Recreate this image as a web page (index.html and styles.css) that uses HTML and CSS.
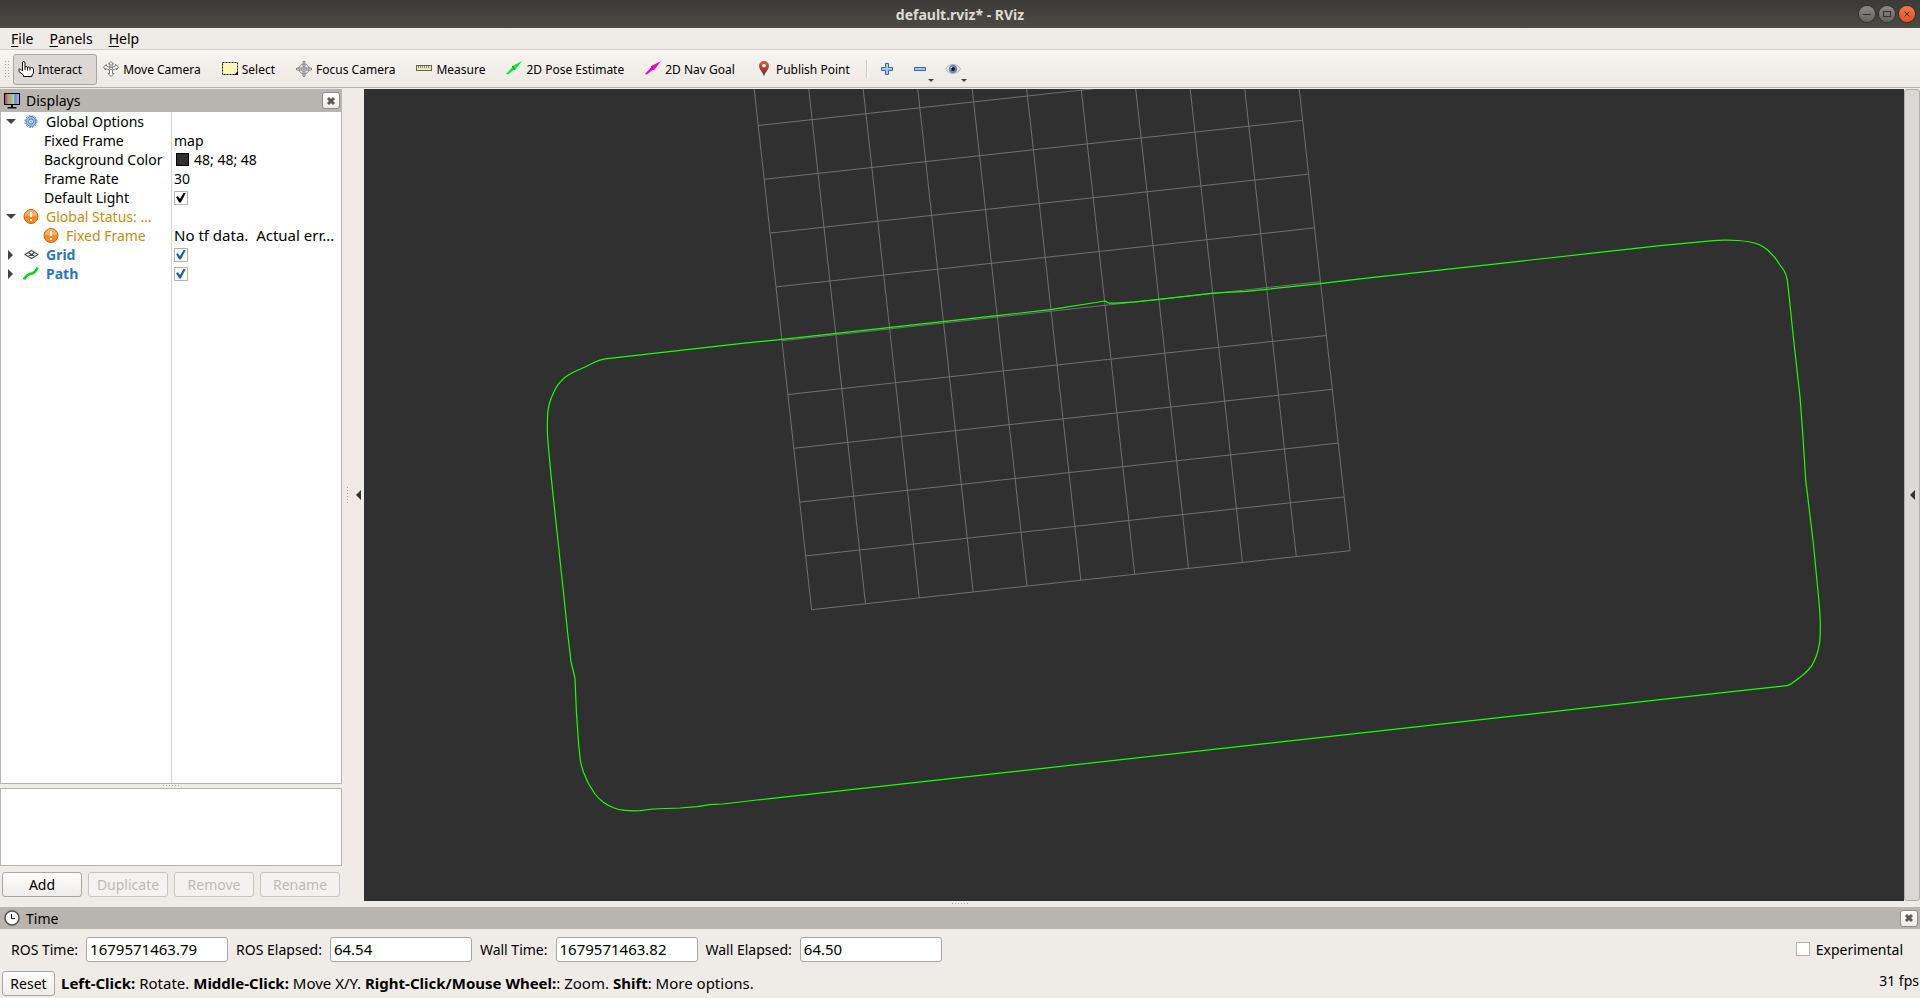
FILE: index.html
```html
<!DOCTYPE html>
<html lang="en">
<head>
<meta charset="utf-8">
<title>default.rviz* - RViz</title>
<link rel="stylesheet" href="styles.css">
</head>
<body>
<header class="titlebar">
  <h1 class="title">default.rviz* - RViz</h1>
  <div class="window-buttons">
    <button class="win" aria-label="Minimize"><svg viewBox="0 0 16 16"><path d="M4 8.500h8"/></svg></button>
    <button class="win" aria-label="Maximize"><svg viewBox="0 0 16 16"><rect x="4.500" y="5.500" width="7" height="5"/></svg></button>
    <button class="win win-close" aria-label="Close"><svg viewBox="0 0 16 16"><path d="M5.500 5.500l5 5M10.500 5.500l-5 5"/></svg></button>
  </div>
</header>
<nav class="menubar">
  <button class="menu"><u>F</u>ile</button>
  <button class="menu"><u>P</u>anels</button>
  <button class="menu"><u>H</u>elp</button>
</nav>
<div class="toolbar">
  <span class="grip"></span>
  <button class="tool tool-on">
    <svg class="icon" viewBox="0 0 16 16"><path d="M4.500 10V2q0-1.500 1.200-1.500T7 2v4.500q0-1 1.200-1T9.500 7q0-1 1.200-1T12 7.500q0-1 1.500-1T15.500 8v4l-1.500 2v1.500H5.500V14L1 10.500v-2q0-1 1.500-.5l2 2M7 6.500V9M9.500 7v2.500M12 7.500v2" fill="#fff" stroke="#111"/></svg>
    Interact</button>
  <button class="tool">
    <svg class="icon" viewBox="0 0 16 16"><g fill="#fff" stroke="#777"><path d="M8 .5l2.500 2.500H9v3.500l3.500-1.500V3.500L15.500 6 13.500 9V7.500L9.500 9v3.500H11L8 15.500 5 12.500h1.500V9l-4-1.500V9L.5 6l3-2.500V5L7 6.500V3H5.500z"/><path d="M6 7.500L8 6l2 1.500L8 9z"/></g></svg>
    Move Camera</button>
  <button class="tool">
    <svg class="icon" viewBox="0 0 16 16"><rect x=".5" y="1.500" width="15" height="12" fill="#fff5b5" stroke="#111" stroke-dasharray="2 1"/><path d="M16 10v4h-4z" fill="#000"/></svg>
    Select</button>
  <button class="tool">
    <svg class="icon" viewBox="0 0 16 16"><g fill="none" stroke="#858585"><circle cx="8" cy="8" r="5"/><circle cx="8" cy="8" r="2.500"/><path d="M7 3V.5h2V5M7 3v2.500M3 7H.5v2h5M3 7h2.500M13 7h2.500v2h-5M13 7h-2.500M7 13v2.500h2V11M7 13v-2.500M8 6v4M6 8h4"/></g></svg>
    Focus Camera</button>
  <button class="tool">
    <svg class="icon" viewBox="0 0 16 16"><rect x=".5" y="4.500" width="15" height="5" fill="#efe6ae" stroke="#66645c"/><path d="M2.500 5v2M4.500 5v2M6.500 5v2M8.500 5v2M10.500 5v2M12.500 5v2" stroke="#8c8768"/></svg>
    Measure</button>
  <button class="tool">
    <svg class="icon" viewBox="0 0 16 16"><path d="M0 13l6-6.500.5-1.500L16 0 9.500 8.500 7.500 9 2 13.500z" fill="#00f02c"/><path d="M6.500 5l2 3.500" stroke="#087d1a"/></svg>
    2D Pose Estimate</button>
  <button class="tool">
    <svg class="icon" viewBox="0 0 16 16"><path d="M0 13l6-6.500.5-1.500L16 0 9.500 8.500 7.500 9 2 13.500z" fill="#f800d5"/><path d="M6.500 5l2 3.500" stroke="#8f087c"/></svg>
    2D Nav Goal</button>
  <button class="tool">
    <svg class="icon" viewBox="0 0 16 16"><defs><linearGradient id="pin" x2="0" y2="1"><stop offset=".2" stop-color="#de4e31"/><stop offset="1" stop-color="#473412"/></linearGradient></defs><path d="M8 15.500C7.500 12 3 8.500 3 4.700a5 4.700 0 0 1 10 0c0 3.800-4.500 7.300-5 10.800z" fill="url(#pin)"/><circle cx="8" cy="4.700" r="1.800" fill="#fff"/></svg>
    Publish Point</button>
  <span class="separator"></span>
  <button class="tool-small" aria-label="Add tool"><svg class="icon" viewBox="0 0 16 16"><path d="M6.500 2.500h3v4h4v3h-4v4h-3v-4h-4v-3h4z" fill="#a9c8ea" stroke="#3465a4"/></svg></button>
  <button class="tool-small has-menu" aria-label="Remove tool"><svg class="icon" viewBox="0 0 16 16"><path d="M2.500 6.500h11v3h-11z" fill="#a9c8ea" stroke="#3465a4"/></svg></button>
  <button class="tool-small has-menu" aria-label="Tool visibility"><svg class="icon" viewBox="0 0 16 16"><path d="M.5 8Q3 3.500 8 3.500T15.500 8Q13 12.500 8 12.500T.5 8z" fill="#e9e9e7" stroke="#b5b5b2"/><circle cx="8" cy="8" r="3.800" fill="#7089c5" stroke="#52659c" stroke-width=".6"/><circle cx="8" cy="8" r="1.900" fill="#10152a"/><circle cx="6.500" cy="6.500" r=".8" fill="#fff"/></svg></button>
</div>
<main class="workspace">
  <aside class="displays">
    <header class="dock-title">
      <svg class="icon" viewBox="0 0 16 16"><defs><linearGradient id="scr"><stop offset=".05" stop-color="#b94b4b"/><stop offset=".33" stop-color="#d9a0a0"/><stop offset=".34" stop-color="#69bd69"/><stop offset=".66" stop-color="#b5e5b5"/><stop offset=".67" stop-color="#7777d7"/><stop offset="1" stop-color="#b8b8ee"/></linearGradient></defs><rect x=".5" y=".5" width="15" height="11" fill="url(#scr)" stroke="#000"/><path d="M7 12h2v2h3.500v1.500h-9V14H7z" fill="#111"/></svg>
      <h2>Displays</h2>
      <button class="dock-close" aria-label="Close Displays"><svg viewBox="0 0 10 10"><path d="M2 2l6 6M8 2l-6 6"/></svg></button>
    </header>
    <div class="tree">
      <table>
        <colgroup><col class="col-name"><col></colgroup>
        <tr><td><div class="cell"><i class="arrow open"></i><svg class="icon" viewBox="0 0 16 16"><circle cx="8" cy="7.500" r="5" fill="#9dbde3" stroke="#4a7fc2"/><circle cx="8" cy="7.500" r="6" fill="none" stroke="#4a7fc2" stroke-dasharray="1.800 1.340"/><circle cx="8" cy="7.500" r="2.500" fill="#dce8f6" stroke="#4a7fc2"/><circle cx="8" cy="7.500" r=".8" fill="#4a7fc2"/></svg>Global Options</div></td><td></td></tr>
        <tr><td><div class="cell leaf">Fixed Frame</div></td><td><div class="value">map</div></td></tr>
        <tr><td><div class="cell leaf">Background Color</div></td><td><div class="value"><i class="swatch"></i>48; 48; 48</div></td></tr>
        <tr><td><div class="cell leaf">Frame Rate</div></td><td><div class="value">30</div></td></tr>
        <tr><td><div class="cell leaf">Default Light</div></td><td><div class="value"><input type="checkbox" class="check" aria-label="Default Light" checked></div></td></tr>
        <tr class="warn"><td><div class="cell"><i class="arrow open"></i><svg class="icon" viewBox="0 0 16 16"><circle cx="8" cy="7.500" r="7" fill="#f78a1e" stroke="#cf6410"/><path d="M2 6.500a6 5.500 0 0 1 12 0q-6 2-12 0z" fill="#fbb069"/><path d="M8 3v5M8 10v2" stroke="#fff" stroke-width="2"/></svg>Global Status: …</div></td><td></td></tr>
        <tr class="warn"><td><div class="cell child"><svg class="icon" viewBox="0 0 16 16"><circle cx="8" cy="7.500" r="7" fill="#f78a1e" stroke="#cf6410"/><path d="M2 6.500a6 5.500 0 0 1 12 0q-6 2-12 0z" fill="#fbb069"/><path d="M8 3v5M8 10v2" stroke="#fff" stroke-width="2"/></svg>Fixed Frame</div></td><td><div class="value message">No tf data.&nbsp; Actual err…</div></td></tr>
        <tr class="display"><td><div class="cell"><i class="arrow"></i><svg class="icon" viewBox="0 0 16 16"><path d="M8.500 3.500L15 7.500 8.500 11.500 2 7.500zM5.300 5.500l6.500 4M11.700 5.500l-6.400 4" fill="none" stroke="#4a4a4a" stroke-width="1.100"/></svg>Grid</div></td><td><div class="value"><input type="checkbox" class="check blue" aria-label="Grid" checked></div></td></tr>
        <tr class="display"><td><div class="cell"><i class="arrow"></i><svg class="icon" viewBox="0 0 16 16"><path d="M1 13.500C4 7.500 6 8.500 9 7.500s4-2 5.500-6" fill="none" stroke="#00d90c" stroke-width="2.600"/></svg>Path</div></td><td><div class="value"><input type="checkbox" class="check blue" aria-label="Path" checked></div></td></tr>
      </table>
    </div>
    <div class="splitter"></div>
    <div class="description"></div>
    <div class="actions">
      <button class="btn">Add</button>
      <button class="btn" disabled>Duplicate</button>
      <button class="btn" disabled>Remove</button>
      <button class="btn" disabled>Rename</button>
    </div>
  </aside>
  <button class="handle handle-left" aria-label="Hide left dock"><i class="dots"></i><i class="tri-left"></i></button>
  <div class="view">
    <svg viewBox="364 89 1540 812" preserveAspectRatio="xMidYMid slice" role="img" aria-label="Grid and path">
      <path id="grid" class="grid-lines"/>
      <path class="route" d="M1105 301L1109 303.200H1116L1135 301.800 1159 299.300 1213 293.200 1246 291.400 1267 289.300 1320 283.600 1360 278.900 1660 245.700 1703 241.700Q1714 240.400 1723 240.200 1732 240 1738 240.500 1745 241 1750 242 1756 243.200 1760 245 1764 247 1768 250.300L1775 257.700 1780 265 1784 270.500Q1786 274 1787.300 280L1789.300 298 1793.300 336.700 1800 396.700 1802.700 433 1805.700 480 1813.300 543 1818.500 596.700Q1820 612 1820.300 623 1820.500 634 1819.700 642 1818.600 649 1816.700 655 1814.500 661 1811.700 666 1808 670.500 1803.300 674.700L1792 683.300Q1789 685.500 1786.700 685.700L1723 692.700 1660 699.700 770 798.700 756.700 800 723 804 710 804.700 697 806.700 680 808 653 809 640 810.700Q632 811 625 810.400 619 809.800 613.300 807.700 608 805.500 603.300 802.300 599 799 595 794L588.300 783.300 583.300 771.700Q581.300 766 580.300 760L578.700 745 576.300 710 575 678.300 573 670 571 661.700 567.700 633.300 564.300 600 555 513.300 551 475 548.700 450Q547.500 438 547.300 430 547.300 420 547.700 413.300 548.200 408 549.300 404 551 398 553.300 393.300 555.500 388.500 558 384.700 561 381 565 377.300 569 374.500 573.300 372.300L585 367 595 362Q600 359.500 605 358.800L740 343.600 782 339.300 997 315.700 1052 309.300z"/>
    </svg>
  </div>
  <button class="handle handle-right" aria-label="Hide right dock"><i class="tri-left"></i></button>
</main>
<div class="splitter splitter-bottom"></div>
<section class="time">
  <header class="dock-title">
    <svg class="icon" viewBox="0 0 16 16"><circle cx="8" cy="8" r="7" fill="#fff" stroke="#555" stroke-width="1.600"/><path d="M7.500 4v4.500H11" fill="none" stroke="#111"/></svg>
    <h2>Time</h2>
    <button class="dock-close" aria-label="Close Time"><svg viewBox="0 0 10 10"><path d="M2 2l6 6M8 2l-6 6"/></svg></button>
  </header>
  <div class="time-row">
    <label for="rt">ROS Time:</label><input id="rt" class="field" value="1679571463.79" readonly>
    <label for="re">ROS Elapsed:</label><input id="re" class="field" value="64.54" readonly>
    <label for="wt">Wall Time:</label><input id="wt" class="field" value="1679571463.82" readonly>
    <label for="we">Wall Elapsed:</label><input id="we" class="field" value="64.50" readonly>
    <label class="experimental"><input type="checkbox" class="check">Experimental</label>
  </div>
</section>
<footer class="status">
  <button class="btn reset">Reset</button>
  <p class="hint"><b>Left-Click:</b> Rotate. <b>Middle-Click:</b> Move X/Y. <b>Right-Click/Mouse Wheel:</b>: Zoom. <b>Shift</b>: More options.</p>
  <span class="fps">31 fps</span>
</footer>
<script src="grid.js"></script>
</body>
</html>
```
FILE: styles.css
```css
* { box-sizing: border-box; }
body {
  margin: 0;
  height: 100vh;
  display: flex;
  flex-direction: column;
  overflow: hidden;
  background: #efebe7;
  color: #000;
  font: 14px/19px "Noto Sans", "Open Sans", sans-serif;
}
button, input { font: inherit; color: inherit; }
button { padding: 0; border: 0; background: none; }
h1, h2, p { margin: 0; font-size: inherit; font-weight: normal; }
svg { display: block; }
.icon { width: 16px; height: 16px; flex: none; }

.titlebar {
  display: grid;
  grid-template-columns: 1fr auto 1fr;
  align-items: center;
  height: 28px;
  background: linear-gradient(#3b3a36, #4c4a44);
  color: #dfdbd2;
}
.title { grid-column: 2; font-size: 14px; font-weight: bold; }
.window-buttons { display: flex; justify-content: flex-end; gap: 4px; padding-right: 5px; }
.win {
  width: 16px;
  height: 16px;
  border-radius: 50%;
  background: linear-gradient(#8b8a84, #62615b);
  box-shadow: 0 0 0 1px #33322e;
}
.win-close { background: linear-gradient(#f8764c, #e4531f); }
.win svg { width: 16px; height: 16px; fill: none; stroke: #33322e; }

.menubar { display: flex; gap: 16px; height: 22px; padding-left: 11px; border-bottom: 1px solid #cfcbc7; }
.menu { height: 21px; }
.menu u { text-underline-offset: 2px; }

.toolbar {
  display: flex;
  align-items: center;
  height: 38px;
  margin-bottom: 1px;
  padding: 1px 0 0 4px;
  border-bottom: 1px solid #b3afab;
  background: linear-gradient(#f7f4f1, #edeae5);
  font-size: 12px;
}
.grip {
  width: 5px;
  height: 18px;
  margin-right: 4px;
  background: radial-gradient(#aaa6a2 0.8px, transparent 1px) 0 0 / 3px 3px;
}
.tool {
  display: flex;
  align-items: center;
  gap: 4px;
  height: 31px;
  margin-right: 1px;
  padding: 0 14px 0 4px;
  border: 1px solid transparent;
  border-radius: 3px;
  white-space: nowrap;
}
.tool-on { border-color: #a9a5a2; background: #dcd8d5; }
.separator { width: 2px; height: 19px; margin-right: 11px; border-left: 1px solid #cbc7c3; border-right: 1px solid #fff; }
.tool-small { position: relative; width: 16px; height: 31px; margin-right: 17px; display: flex; align-items: center; }
.has-menu::after {
  content: "";
  position: absolute;
  right: -6px;
  bottom: 3px;
  border: 3px solid transparent;
  border-top-color: #444;
  border-bottom: 0;
}

.workspace { flex: 1; min-height: 0; display: flex; }
.displays { width: 342px; display: flex; flex-direction: column; }
.dock-title { display: flex; align-items: center; gap: 6px; height: 23px; padding: 0 2px 0 4px; background: #b8b4b0; }
.dock-close {
  width: 18px;
  height: 17px;
  margin-left: auto;
  display: grid;
  place-items: center;
  border: 1px solid #8f8b88;
  border-radius: 3px;
  background: linear-gradient(#fff, #ecebe9);
}
.dock-close svg { width: 10px; height: 10px; stroke: #5c5a58; stroke-width: 3; }

.tree {
  flex: 1;
  min-height: 0;
  border: 1px solid #b8b4b0;
  border-top: 0;
  background: linear-gradient(#d8d6d4, #d8d6d4) 170px 0 / 1px 100% no-repeat #fff;
}
.tree table { width: 100%; table-layout: fixed; border-collapse: collapse; }
.tree td { height: 19px; padding: 0; }
.col-name { width: 171px; }
.cell { display: flex; align-items: center; height: 19px; padding-left: 5px; white-space: nowrap; }
.cell .icon { margin-right: 7px; }
.leaf { padding-left: 43px; }
.child { padding-left: 42px; }
.arrow { width: 17px; flex: none; }
.arrow::before { content: ""; display: block; width: 0; margin-left: 2px; border: 5px solid transparent; border-left-color: #444; border-right: 0; }
.arrow.open::before { margin-left: 0; border: 5px solid transparent; border-top-color: #444; border-bottom: 0; }
.value { display: flex; align-items: center; height: 19px; padding-left: 2px; white-space: nowrap; }
.message { font-size: 15px; }
.swatch { width: 13px; height: 13px; margin: 0 5px 0 2px; border: 1px solid #000; background: #303030; }
.warn .cell { color: #c88a10; }
.display .cell { color: #2a76c6; font-weight: bold; }
.check {
  appearance: none;
  width: 14px;
  height: 14px;
  margin: 0;
  display: grid;
  place-items: center;
  border: 1px solid #b5b1ae;
  background: #fff;
}
.check:checked::before {
  content: "";
  width: 10px;
  height: 10px;
  background: #000;
  clip-path: polygon(0 45%, 18% 38%, 40% 66%, 78% 0, 100% 0, 48% 100%, 32% 100%);
}
.blue:checked::before { background: #1d5fa8; }

.splitter { height: 4px; }
.splitter::before {
  content: "";
  display: block;
  width: 18px;
  height: 3px;
  margin: 0 auto;
  background: radial-gradient(#aaa6a2 0.8px, transparent 1px) 0 0 / 3px 3px;
}
.splitter-bottom { height: 6px; padding-top: 1px; }
.description { height: 78px; border: 1px solid #b8b4b0; background: #fff; }
.actions { display: grid; grid-template-columns: repeat(4, 1fr); gap: 6px; padding: 6px 2px 4px; }
.btn {
  height: 25px;
  border: 1px solid #a9a5a2;
  border-radius: 3px;
  background: linear-gradient(#fdfcfc, #efedeb);
}
.btn:disabled { border-color: #c9c5c2; background: #f4f2f0; color: #bebab7; }

.handle { display: flex; align-items: center; justify-content: center; }
.handle-left { width: 22px; gap: 7px; }
.handle-right { width: 16px; border: 1px solid #b1adaa; border-radius: 3px; background: #dcd8d5; }
.dots { width: 3px; height: 18px; background: radial-gradient(#aaa6a2 0.8px, transparent 1px) 0 0 / 3px 3px; }
.tri-left { border: 5px solid transparent; border-right-color: #333; border-left: 0; }
.view { flex: 1; min-width: 0; background: #303030; }
.view svg { width: 100%; height: 100%; }
.grid-lines { fill: none; stroke: #707070; stroke-width: 1; }
.route { fill: none; stroke: #1aff00; stroke-width: 1.2; }

.time .dock-title { height: 22px; }
.time-row { display: flex; align-items: center; gap: 8px; height: 40px; padding: 0 17px 0 11px; }
.field {
  width: 142px;
  height: 25px;
  padding: 0 3px;
  border: 1px solid #a9a5a2;
  border-radius: 3px;
  background: #fff;
  font-size: 15px;
}
.experimental { display: flex; align-items: center; gap: 6px; margin-left: auto; }
.status { display: flex; align-items: center; gap: 6px; height: 29px; padding: 0 1px 0 2px; }
.reset { width: 53px; }
.hint { font-size: 15px; }
.fps { margin-left: auto; padding-bottom: 6px; }
```
FILE: grid.js
```js
// 10 x 10 cell grid drawn from its lower left corner.
const cells = 10;
const origin = [811.6, 609.7];
const along = [53.85, -5.9];
const up = [-5.93, -53.8];
const at = (i, j) => [0, 1].map(k => (origin[k] + along[k] * i + up[k] * j).toFixed(1)).join(" ");
let d = "";
for (let n = 0; n <= cells; n++) {
  d += `M${at(n, 0)}L${at(n, cells)}M${at(0, n)}L${at(cells, n)}`;
}
document.getElementById("grid").setAttribute("d", d);
```
